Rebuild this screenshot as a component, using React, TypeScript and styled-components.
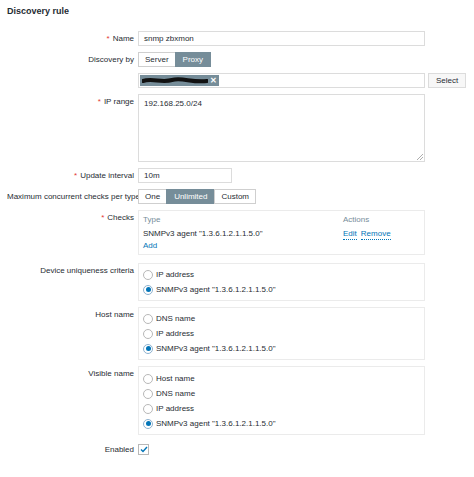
import React from "react";
import styled, { createGlobalStyle } from "styled-components";

const GlobalStyle = createGlobalStyle`
  html, body {
    margin: 0;
    padding: 0;
    background: #ffffff;
  }
  body {
    font-family: "Liberation Sans", Arial, sans-serif;
    font-size: 8px;
    color: #1f2c33;
  }
`;

const Page = styled.div`
  width: 474px;
  height: 477px;
  padding: 5px 0 0 7px;
  box-sizing: border-box;
`;

const Title = styled.h1`
  margin: 0 0 13px 0;
  font-size: 9px;
  font-weight: bold;
  line-height: 13px;
  color: #1f2c33;
`;

const Form = styled.div`
  display: flex;
  flex-direction: column;
  gap: 6px;
`;

const Row = styled.div<{ $gap?: number }>`
  display: grid;
  grid-template-columns: 127px 1fr;
  column-gap: 4px;
  align-items: start;
  margin-bottom: ${(p) => p.$gap ?? 0}px;
`;

const Label = styled.div`
  text-align: right;
  line-height: 15px;
  white-space: nowrap;
  color: #1f2c33;
`;

const Req = styled.span`
  color: #e33734;
  margin-right: 3px;
`;

const TextInput = styled.div<{ $w?: number }>`
  width: ${(p) => p.$w ?? 287}px;
  height: 15px;
  box-sizing: border-box;
  border: 1px solid #dcdcdc;
  padding: 0 5px;
  line-height: 13px;
  background: #fff;
`;

const TextArea = styled.div`
  position: relative;
  width: 287px;
  height: 68px;
  box-sizing: border-box;
  border: 1px solid #dcdcdc;
  padding: 2px 5px;
  line-height: 13px;
`;

const Grip = styled.svg`
  position: absolute;
  right: 1px;
  bottom: 1px;
`;

const Segments = styled.div`
  display: inline-flex;
  height: 15px;
`;

const Segment = styled.div<{ $on?: boolean }>`
  box-sizing: border-box;
  height: 15px;
  line-height: 13px;
  padding: 0 ${(p) => (p.$on ? 7 : 6)}px;
  border: 1px solid ${(p) => (p.$on ? "#768d99" : "#cfcfcf")};
  margin-left: -1px;
  background: ${(p) => (p.$on ? "#768d99" : "#ffffff")};
  color: ${(p) => (p.$on ? "#ffffff" : "#1f2c33")};
  &:first-child {
    margin-left: 0;
  }
`;

const PickRow = styled.div`
  display: flex;
  gap: 3px;
`;

const MultiSelect = styled.div`
  width: 287px;
  height: 15px;
  box-sizing: border-box;
  border: 1px solid #dcdcdc;
  padding: 1px;
  display: flex;
`;

const Chip = styled.div`
  width: 79px;
  height: 11px;
  background: #768d99;
  display: flex;
  align-items: center;
  justify-content: space-between;
  padding: 0 2px;
  box-sizing: border-box;
  color: #fff;
  font-size: 8px;
  font-weight: bold;
`;

const SelectButton = styled.div`
  height: 15px;
  box-sizing: border-box;
  padding: 0 7px;
  line-height: 13px;
  border: 1px solid #dcdcdc;
  background: #f7f7f7;
  color: #1f2c33;
`;

const Box = styled.div<{ $pt?: number }>`
  width: 287px;
  box-sizing: border-box;
  border: 1px solid #ebebeb;
  padding: ${(p) => p.$pt ?? 3}px 4px 3px 4px;
`;

const Table = styled.div`
  display: grid;
  grid-template-columns: 200px 1fr;
  line-height: 14px;
`;

const Head = styled.div`
  color: #768d99;
`;

const Links = styled.div`
  display: flex;
  gap: 4px;
`;

const Link = styled.span<{ $dotted?: boolean }>`
  color: #0275b8;
  border-bottom: ${(p) => (p.$dotted ? "1px dotted #0275b8" : "none")};
  line-height: 10px;
  align-self: center;
  justify-self: start;
`;

const RadioList = styled.div`
  display: flex;
  flex-direction: column;
`;

const RadioRow = styled.div`
  display: flex;
  align-items: center;
  height: 15px;
  gap: 3px;
`;

const RadioDot = styled.span<{ $on?: boolean }>`
  width: 10px;
  height: 10px;
  box-sizing: border-box;
  border-radius: 50%;
  border: 1px solid ${(p) => (p.$on ? "#8fb2cf" : "#b8b8b8")};
  display: flex;
  align-items: center;
  justify-content: center;
  &::after {
    content: "";
    display: ${(p) => (p.$on ? "block" : "none")};
    width: 5px;
    height: 5px;
    border-radius: 50%;
    background: #0275b8;
  }
`;

const CheckBox = styled.span`
  width: 11px;
  height: 11px;
  box-sizing: border-box;
  border: 1px solid #b8b8b8;
  display: flex;
  align-items: center;
  justify-content: center;
  margin-top: 2px;
`;

const SNMP = 'SNMPv3 agent "1.3.6.1.2.1.1.5.0"';

const Radios = ({ items, selected }: { items: string[]; selected: number }) => (
  <RadioList>
    {items.map((t, i) => (
      <RadioRow key={t}>
        <RadioDot $on={i === selected} />
        <span>{t}</span>
      </RadioRow>
    ))}
  </RadioList>
);

export default function App() {
  return (
    <Page>
      <GlobalStyle />
      <Title>Discovery rule</Title>
      <Form>
        <Row>
          <Label>
            <Req>*</Req>Name
          </Label>
          <TextInput>snmp zbxmon</TextInput>
        </Row>
        <Row>
          <Label>Discovery by</Label>
          <Segments>
            <Segment>Server</Segment>
            <Segment $on>Proxy</Segment>
          </Segments>
        </Row>
        <Row>
          <Label />
          <PickRow>
            <MultiSelect>
              <Chip>
                <svg width="66" height="9" viewBox="0 0 66 9">
                  <path
                    d="M1 5 C10 2, 20 7, 30 4 S50 7, 65 5"
                    stroke="#111"
                    strokeWidth="4"
                    fill="none"
                    strokeLinecap="round"
                  />
                </svg>
                <span>✕</span>
              </Chip>
            </MultiSelect>
            <SelectButton>Select</SelectButton>
          </PickRow>
        </Row>
        <Row>
          <Label>
            <Req>*</Req>IP range
          </Label>
          <TextArea>
            192.168.25.0/24
            <Grip width="6" height="6" viewBox="0 0 6 6">
              <path d="M6 0 L0 6 M6 3 L3 6" stroke="#999" strokeWidth="0.8" />
            </Grip>
          </TextArea>
        </Row>
        <Row>
          <Label>
            <Req>*</Req>Update interval
          </Label>
          <TextInput $w={94}>10m</TextInput>
        </Row>
        <Row>
          <Label>Maximum concurrent checks per type</Label>
          <Segments>
            <Segment>One</Segment>
            <Segment $on>Unlimited</Segment>
            <Segment>Custom</Segment>
          </Segments>
        </Row>
        <Row $gap={2}>
          <Label>
            <Req>*</Req>Checks
          </Label>
          <Box $pt={2}>
            <Table>
              <Head>Type</Head>
              <Head>Actions</Head>
              <div>{SNMP}</div>
              <Links>
                <Link $dotted>Edit</Link>
                <Link $dotted>Remove</Link>
              </Links>
              <Link>Add</Link>
            </Table>
          </Box>
        </Row>
        <Row>
          <Label>Device uniqueness criteria</Label>
          <Box>
            <Radios items={["IP address", SNMP]} selected={1} />
          </Box>
        </Row>
        <Row>
          <Label>Host name</Label>
          <Box>
            <Radios items={["DNS name", "IP address", SNMP]} selected={2} />
          </Box>
        </Row>
        <Row $gap={1}>
          <Label>Visible name</Label>
          <Box $pt={4}>
            <Radios items={["Host name", "DNS name", "IP address", SNMP]} selected={3} />
          </Box>
        </Row>
        <Row>
          <Label>Enabled</Label>
          <CheckBox>
            <svg width="8" height="7" viewBox="0 0 8 7">
              <path d="M1 3.5 L3 5.5 L7 1" stroke="#0275b8" strokeWidth="1.4" fill="none" />
            </svg>
          </CheckBox>
        </Row>
      </Form>
    </Page>
  );
}
